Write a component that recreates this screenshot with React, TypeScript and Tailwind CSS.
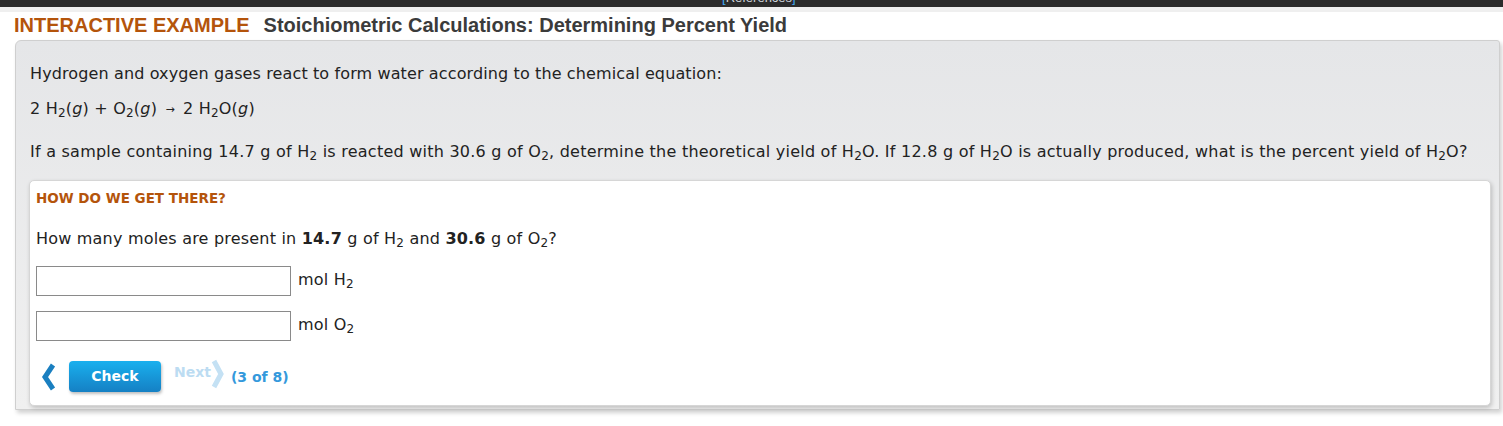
import React from "react";

const body = { fontFamily: '"DejaVu Sans", Verdana, sans-serif' };

function Sub({ children }: { children: React.ReactNode }) {
  return <sub className="text-[75%]">{children}</sub>;
}

export default function App() {
  return (
    <div className="w-[1503px] h-[426px] bg-white overflow-hidden">
      {/* top bar */}
      <div className="h-[7px] bg-[#2b2b2b] overflow-hidden flex">
        <div
          className="ml-[722px] -mt-[9px] text-[13px] text-[#cfd6de] leading-[14px]"
          style={{ fontFamily: '"Liberation Sans", Arial, sans-serif' }}
        >
          <span className="text-[#3fa9f5]">[</span>References<span className="text-[#3fa9f5]">]</span>
        </div>
      </div>
      <div className="h-[5px] bg-[#efefef]" />

      {/* title */}
      <div
        className="pl-[14px] h-[26px] flex items-center gap-[14px] text-[20px] font-bold"
        style={{ fontFamily: '"Liberation Sans", Arial, sans-serif' }}
      >
        <span className="text-[#b4540b]">INTERACTIVE EXAMPLE</span>
        <span className="text-[#3b3b3b]">Stoichiometric Calculations: Determining Percent Yield</span>
      </div>

      {/* outer box */}
      <div
        className="ml-[15px] mr-[3px] mt-[2px] h-[370px] rounded-tl-[6px] rounded-tr-[3px] border border-[#cfcfcf] bg-gradient-to-b from-[#e5e6e8] to-[#f0f0f0] shadow-[2px_3px_4px_rgba(0,0,0,0.18)] pl-[13px] pr-[8px] pt-[22px] text-[16px] tracking-[0.2px] text-[#222]"
        style={body}
      >
        <p className="pl-[1px] leading-[22px] tracking-[0.12px]">
          Hydrogen and oxygen gases react to form water according to the chemical equation:
        </p>
        <p className="pl-[1px] mt-[13px] leading-[22px]">
          2 H<Sub>2</Sub>(<i>g</i>) + O<Sub>2</Sub>(<i>g</i>) <span className="text-[11px] align-[1px] px-[3px]">→</span> 2 H
          <Sub>2</Sub>O(<i>g</i>)
        </p>
        <p className="pl-[1px] mt-[20px] leading-[22px] tracking-[0.24px]">
          If a sample containing 14.7 g of H<Sub>2</Sub> is reacted with 30.6 g of O<Sub>2</Sub>, determine the
          theoretical yield of H<Sub>2</Sub>O. If 12.8 g of H<Sub>2</Sub>O is actually produced, what is the percent
          yield of H<Sub>2</Sub>O?
        </p>

        {/* inner box */}
        <div className="mt-[17px] h-[226px] rounded-[5px] border border-[#d6d6d6] bg-white shadow-[1px_2px_4px_rgba(0,0,0,0.2)] pl-[6px] pt-[8px]">
          <div className="text-[13.5px] tracking-normal font-bold text-[#b4540b] leading-[18px]">HOW DO WE GET THERE?</div>
          <p className="mt-[22px] leading-[20px]">
            How many moles are present in <b>14.7</b> g of H<Sub>2</Sub> and <b>30.6</b> g of O<Sub>2</Sub>?
          </p>
          <div className="mt-[17px] flex items-center gap-[7px]">
            <div className="w-[255px] h-[30px] border border-[#8a8a8a] bg-white" />
            <span className="-mt-[2px]">
              mol H<Sub>2</Sub>
            </span>
          </div>
          <div className="mt-[15px] flex items-center gap-[7px]">
            <div className="w-[255px] h-[30px] border border-[#8a8a8a] bg-white" />
            <span className="-mt-[2px]">
              mol O<Sub>2</Sub>
            </span>
          </div>
          <div className="mt-[20px] flex items-center tracking-normal">
            <svg width="16" height="28" viewBox="0 0 16 28" className="ml-[5px]">
              <path d="M12 2 L4 14 L12 26" fill="none" stroke="#1a7fc0" strokeWidth="5" strokeLinejoin="miter" />
            </svg>
            <div className="ml-[12px] w-[92px] h-[31px] rounded-[4px] bg-gradient-to-b from-[#1ab0ee] to-[#1580c4] shadow-[1px_2px_3px_rgba(0,0,0,0.25)] flex items-center justify-center text-white font-bold text-[14px]">
              Check
            </div>
            <span className="ml-[13px] -mt-[8px] text-[14px] font-bold text-[#bcdcf2]">Next</span>
            <svg width="14" height="30" viewBox="0 0 14 30" className="-mt-[6px]">
              <path d="M3 2 L10 15 L3 28" fill="none" stroke="#c4e1f4" strokeWidth="5" />
            </svg>
            <span className="ml-[6px] mt-[2px] text-[14px] font-bold text-[#3499dc]">(3 of 8)</span>
          </div>
        </div>
      </div>
    </div>
  );
}
